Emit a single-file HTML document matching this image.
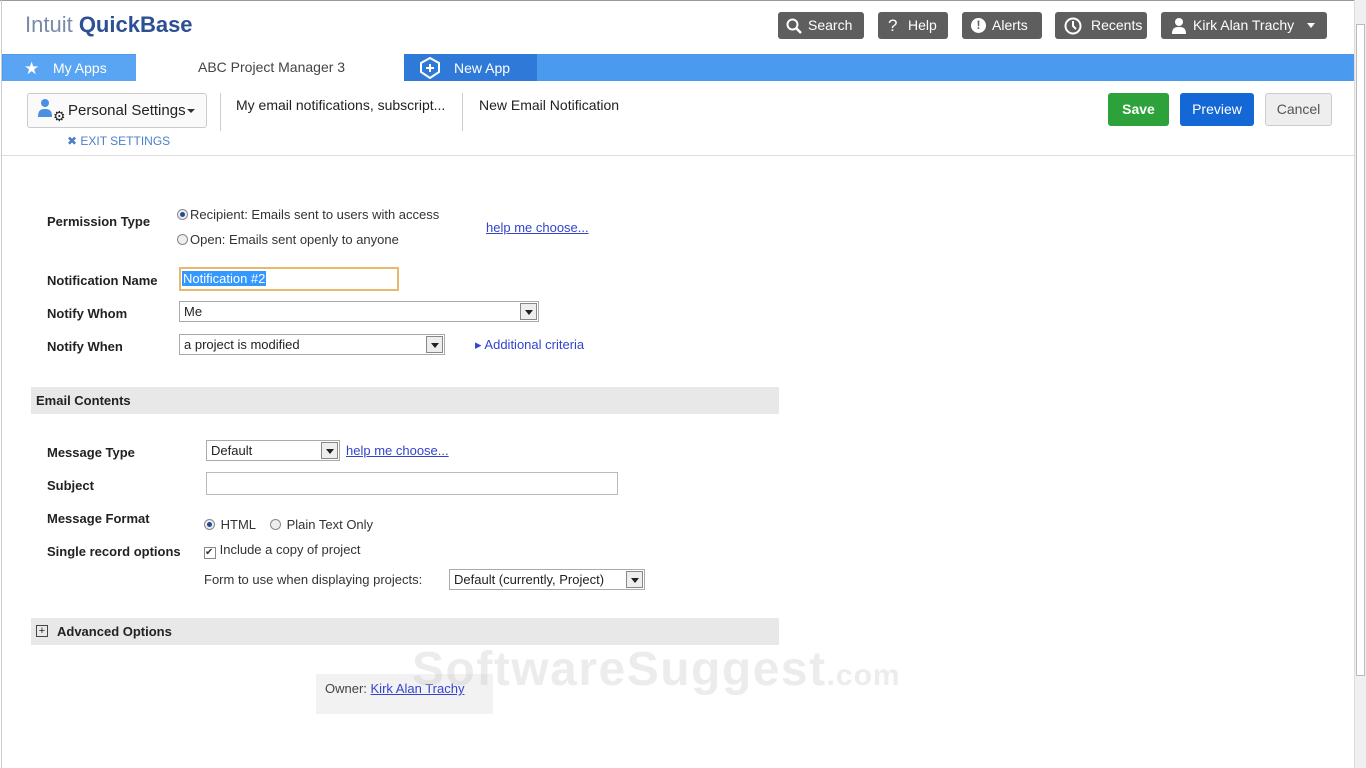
<!DOCTYPE html>
<html><head><meta charset="utf-8"><style>
*{box-sizing:border-box;margin:0;padding:0}
body{width:1366px;height:768px;overflow:hidden;background:#fff;font-family:"Liberation Sans",sans-serif;font-size:13px;color:#222;position:relative}
.a{position:absolute;white-space:nowrap}
.tb{position:absolute;top:12px;height:27px;background:#5e5e5e;border-radius:3px;color:#fff;font-size:14px;line-height:27px;padding-left:30px}
.lbl{position:absolute;font-weight:bold;font-size:13px;color:#222}
.sel{position:absolute;height:21px;border:1px solid #aaa;background:#fff;font-size:13px;line-height:19px;padding-left:4px}
.sel i{position:absolute;right:1px;top:1px;width:17px;height:17px;border:1px solid #888;background:#eee}
.sel i:after{content:"";position:absolute;left:4px;top:6px;border-left:4px solid transparent;border-right:4px solid transparent;border-top:5px solid #222}
.rad{display:inline-block;width:11px;height:11px;border:1px solid #888;border-radius:50%;background:#eee;vertical-align:-1px;margin-right:2px;position:relative}
.rad.on:after{content:"";position:absolute;left:2px;top:2px;width:5px;height:5px;border-radius:50%;background:#24489a}
.lnk{color:#3344cc;text-decoration:underline}
</style></head><body>
<div class="a" style="left:0;top:0;width:1366px;height:1px;background:#999"></div>
<div class="a" style="left:1px;top:0;width:1px;height:768px;background:#ccc"></div>
<div class="a" style="left:25px;top:12px;font-size:22px;color:#7a8aaa">Intuit <span style="color:#2d4f94;font-weight:bold">QuickBase</span></div>
<div class="tb" style="left:778px;width:86px">Search<svg style="position:absolute;left:8px;top:6px" width="16" height="16"><circle cx="6.5" cy="6.5" r="5" stroke="#fff" stroke-width="2" fill="none"/><path d="M10 10l5 5" stroke="#fff" stroke-width="2.5"/></svg></div>
<div class="tb" style="left:878px;width:70px">Help<span style="position:absolute;left:10px;font-size:17px">?</span></div>
<div class="tb" style="left:962px;width:80px">Alerts<span style="position:absolute;left:9px;top:6px;width:15px;height:15px;border-radius:50%;background:#fff;color:#5e5e5e;font-weight:bold;font-size:12px;line-height:15px;text-align:center">!</span></div>
<div class="tb" style="left:1055px;width:92px;padding-left:36px">Recents<svg style="position:absolute;left:8px;top:4px" width="20" height="20"><circle cx="10" cy="10" r="7.5" stroke="#fff" stroke-width="2" fill="none"/><path d="M10 5v5l3 3" stroke="#fff" stroke-width="2" fill="none"/></svg></div>
<div class="tb" style="left:1161px;width:166px;padding-left:32px">Kirk Alan Trachy<svg style="position:absolute;left:10px;top:5px" width="16" height="17"><circle cx="8" cy="5" r="4" fill="#fff"/><path d="M1 17c0-6 3-7 7-7s7 1 7 7z" fill="#fff"/></svg><span style="position:absolute;right:12px;top:11px;border-left:4px solid transparent;border-right:4px solid transparent;border-top:5px solid #fff"></span></div>
<div class="a" style="left:2px;top:54px;width:1352px;height:27px;background:#4a9af0"></div>
<div class="a" style="left:3px;top:55px;width:133px;height:26px;background:#5aa5f3;color:#fff;font-size:14px;line-height:27px;padding-left:50px">My Apps<span style="position:absolute;left:21px;font-size:17px">★</span></div>
<div class="a" style="left:136px;top:54px;width:268px;height:27px;background:#fff;font-size:14px;line-height:27px;padding-left:62px;color:#444">ABC Project Manager 3</div>
<div class="a" style="left:404px;top:54px;width:133px;height:27px;background:#2f7ad9;color:#fff;font-size:14px;line-height:28px;padding-left:50px">New App<svg style="position:absolute;left:15px;top:3px" width="22" height="22"><path d="M11 1l9 5v9l-9 6-9-6V6z" stroke="#fff" stroke-width="2" fill="none"/><path d="M11 7v8M7 11h8" stroke="#fff" stroke-width="2"/></svg></div>
<div class="a" style="left:27px;top:93px;width:180px;height:35px;border:1px solid #ccc;border-radius:3px;background:#fafafa;font-size:15px;line-height:33px;padding-left:40px">Personal Settings<svg style="position:absolute;left:10px;top:4px" width="16" height="20"><circle cx="7" cy="5" r="4" fill="#4a90e0"/><path d="M0 19c0-7 3-8 7-8s7 1 7 8z" fill="#4a90e0"/></svg><span style="position:absolute;left:25px;top:15px;font-size:14px;line-height:14px">⚙</span><span style="position:absolute;right:11px;top:15px;border-left:4px solid transparent;border-right:4px solid transparent;border-top:4px solid #333"></span></div>
<div class="a" style="left:67px;top:134px;font-size:12px;color:#4a80c8">✖ EXIT SETTINGS</div>
<div class="a" style="left:220px;top:93px;width:1px;height:38px;background:#ccc"></div>
<div class="a" style="left:236px;top:97px;font-size:14px">My email notifications, subscript...</div>
<div class="a" style="left:462px;top:93px;width:1px;height:38px;background:#ccc"></div>
<div class="a" style="left:479px;top:97px;font-size:14px">New Email Notification</div>
<div class="a" style="left:1108px;top:93px;width:61px;height:33px;background:#2ea23a;border-radius:3px;color:#fff;font-weight:bold;font-size:14px;line-height:33px;text-align:center">Save</div>
<div class="a" style="left:1180px;top:93px;width:74px;height:33px;background:#1368d6;border-radius:3px;color:#fff;font-size:14px;line-height:33px;text-align:center">Preview</div>
<div class="a" style="left:1265px;top:93px;width:67px;height:33px;background:#eee;border:1px solid #ccc;border-radius:3px;color:#555;font-size:14px;line-height:31px;text-align:center">Cancel</div>
<div class="a" style="left:2px;top:155px;width:1352px;height:1px;background:#ddd"></div>
<div class="a" style="left:1354px;top:0;width:12px;height:768px;background:#f0f0f0;border-left:1px solid #ddd"></div>
<div class="a" style="left:1356px;top:24px;width:9px;height:652px;background:#fff;border:1px solid #bbb"></div>

<div class="lbl" style="left:47px;top:214px">Permission Type</div>
<div class="a" style="left:177px;top:207px;font-size:13px;color:#333"><span class="rad on"></span>Recipient: Emails sent to users with access</div>
<div class="a" style="left:177px;top:232px;font-size:13px;color:#333"><span class="rad"></span>Open: Emails sent openly to anyone</div>
<div class="a lnk" style="left:486px;top:220px">help me choose...</div>
<div class="lbl" style="left:47px;top:273px">Notification Name</div>
<div class="a" style="left:179px;top:267px;width:220px;height:24px;border:2px solid #e8b870;background:#fff;padding:2px 1px"><span style="background:#3399ff;color:#fff;font-size:13px;padding:0 1px">Notification #2</span></div>
<div class="lbl" style="left:47px;top:306px">Notify Whom</div>
<div class="sel" style="left:179px;top:301px;width:360px">Me<i></i></div>
<div class="lbl" style="left:47px;top:339px">Notify When</div>
<div class="sel" style="left:179px;top:334px;width:266px">a project is modified<i></i></div>
<div class="a" style="left:475px;top:337px;color:#3344cc">▸ Additional criteria</div>

<div class="a" style="left:31px;top:387px;width:748px;height:27px;background:#e8e8e8;font-weight:bold;line-height:28px;padding-left:5px">Email Contents</div>
<div class="lbl" style="left:47px;top:445px">Message Type</div>
<div class="sel" style="left:206px;top:440px;width:134px">Default<i></i></div>
<div class="a lnk" style="left:346px;top:443px">help me choose...</div>
<div class="lbl" style="left:47px;top:478px">Subject</div>
<div class="a" style="left:206px;top:472px;width:412px;height:23px;border:1px solid #bbb"></div>
<div class="lbl" style="left:47px;top:511px">Message Format</div>
<div class="a" style="left:204px;top:517px;color:#333"><span class="rad on"></span> HTML &nbsp;&nbsp; <span class="rad"></span> Plain Text Only</div>
<div class="lbl" style="left:47px;top:544px">Single record options</div>
<div class="a" style="left:204px;top:542px;color:#333"><span style="display:inline-block;width:12px;height:12px;border:1px solid #888;font-size:10px;line-height:10px;vertical-align:-1px">✔</span> Include a copy of project</div>
<div class="a" style="left:204px;top:572px;color:#333">Form to use when displaying projects:</div>
<div class="sel" style="left:449px;top:569px;width:196px">Default (currently, Project)<i></i></div>

<div class="a" style="left:31px;top:618px;width:748px;height:27px;background:#e8e8e8;font-weight:bold;line-height:28px;padding-left:26px">Advanced Options<span style="position:absolute;left:5px;top:7px;width:12px;height:12px;border:1px solid #444;font-size:11px;line-height:10px;text-align:center;font-weight:normal">+</span></div>
<div class="a" style="left:316px;top:674px;width:177px;height:40px;background:#f2f2f2;padding:7px 9px;color:#444">Owner: <span class="lnk">Kirk Alan Trachy</span></div>
<div class="a" style="left:412px;top:642px;font-size:48px;letter-spacing:1.5px;font-weight:bold;color:rgba(200,200,200,0.35)">SoftwareSuggest<span style="font-size:30px;letter-spacing:1px">.com</span></div>
</body></html>
